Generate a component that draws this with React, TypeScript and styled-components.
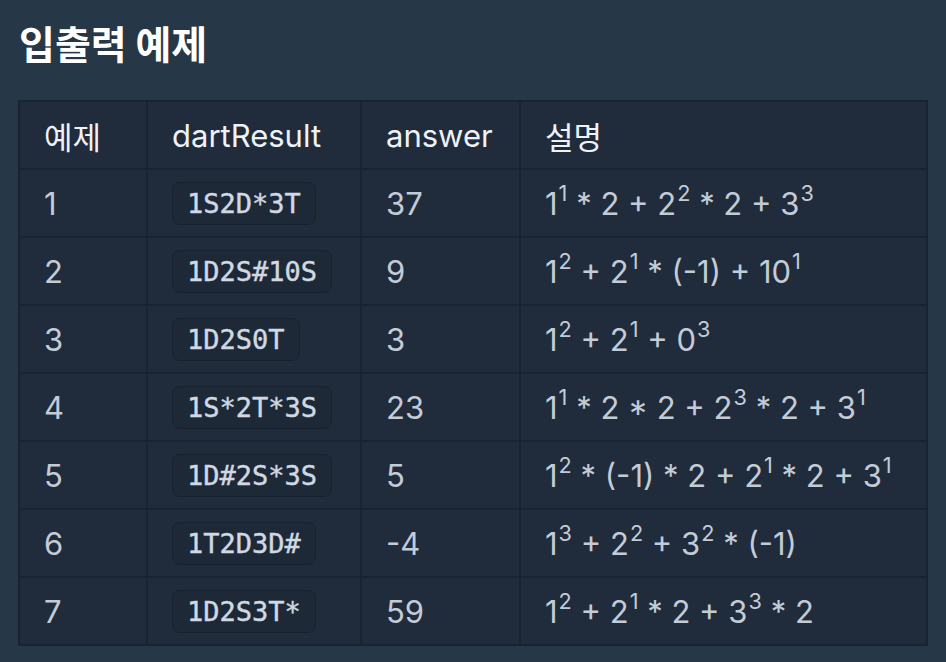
import React from 'react'
import styled, { createGlobalStyle } from 'styled-components'

const GlobalStyle = createGlobalStyle`
  html, body {
    margin: 0;
    padding: 0;
    background: #263747;
  }
  body {
    font-family: Inter, "Noto Sans CJK KR", sans-serif;
  }
`

const Page = styled.main`
  padding: 18px 20px 16px 18px;
  min-height: 662px;
  box-sizing: border-box;
`

const Title = styled.h2`
  margin: 0 0 34px 1px;
  font-family: "Noto Sans CJK KR", sans-serif;
  font-size: 39px;
  font-weight: 700;
  line-height: 48px;
  color: #ffffff;
`

const Table = styled.table`
  width: 908px;
  table-layout: fixed;
  border-collapse: collapse;
  background: #202b3c;
  border: 2px solid #1a2331;
`

const HeadCell = styled.th<{ $w: number }>`
  width: ${(p) => p.$w}px;
  height: 68px;
  padding: 0 0 0 24px;
  border: 2px solid #1a2331;
  text-align: left;
  font-size: 31px;
  font-weight: 400;
  color: #eef2f6;
  box-sizing: border-box;
`

const Cell = styled.td`
  height: 68px;
  padding: 0 0 0 24px;
  border: 2px solid #1a2331;
  font-size: 31px;
  color: #c3ccd6;
  white-space: nowrap;
  box-sizing: border-box;
`

const Code = styled.code`
  display: inline-block;
  padding: 0 14px;
  line-height: 41px;
  border: 1px solid #182130;
  border-radius: 8px;
  background: #1e2938;
  font-family: "DejaVu Sans Mono", monospace;
  font-size: 27px;
  -webkit-text-stroke: 0.4px #d0d9e2;
  color: #d0d9e2;
  vertical-align: middle;
`

const Sup = styled.sup`
  font-size: 0.7em;
  vertical-align: 0.6em;
  line-height: 0;
  margin-left: 1px;
`

type Term = string | [string, string]

const rows: { dart: string; answer: string; expl: Term[] }[] = [
  { dart: '1S2D*3T', answer: '37', expl: [['1', '1'], ' * 2 + ', ['2', '2'], ' * 2 + ', ['3', '3']] },
  { dart: '1D2S#10S', answer: '9', expl: [['1', '2'], ' + ', ['2', '1'], ' * (-1) + ', ['10', '1']] },
  { dart: '1D2S0T', answer: '3', expl: [['1', '2'], ' + ', ['2', '1'], ' + ', ['0', '3']] },
  { dart: '1S*2T*3S', answer: '23', expl: [['1', '1'], ' * 2 * 2 + ', ['2', '3'], ' * 2 + ', ['3', '1']] },
  { dart: '1D#2S*3S', answer: '5', expl: [['1', '2'], ' * (-1) * 2 + ', ['2', '1'], ' * 2 + ', ['3', '1']] },
  { dart: '1T2D3D#', answer: '-4', expl: [['1', '3'], ' + ', ['2', '2'], ' + ', ['3', '2'], ' * (-1)'] },
  { dart: '1D2S3T*', answer: '59', expl: [['1', '2'], ' + ', ['2', '1'], ' * 2 + ', ['3', '3'], ' * 2'] },
]

const Explain = ({ terms }: { terms: Term[] }) => (
  <>
    {terms.map((t, i) =>
      typeof t === 'string' ? (
        <React.Fragment key={i}>{t}</React.Fragment>
      ) : (
        <React.Fragment key={i}>
          {t[0]}
          <Sup>{t[1]}</Sup>
        </React.Fragment>
      ),
    )}
  </>
)

export default function App() {
  return (
    <>
      <GlobalStyle />
      <Page>
        <Title>입출력 예제</Title>
        <Table>
          <thead>
            <tr>
              <HeadCell $w={128}>예제</HeadCell>
              <HeadCell $w={214}>dartResult</HeadCell>
              <HeadCell $w={159}>answer</HeadCell>
              <HeadCell $w={407}>설명</HeadCell>
            </tr>
          </thead>
          <tbody>
            {rows.map((r, i) => (
              <tr key={r.dart}>
                <Cell>{i + 1}</Cell>
                <Cell>
                  <Code>{r.dart}</Code>
                </Cell>
                <Cell>{r.answer}</Cell>
                <Cell>
                  <Explain terms={r.expl} />
                </Cell>
              </tr>
            ))}
          </tbody>
        </Table>
      </Page>
    </>
  )
}
